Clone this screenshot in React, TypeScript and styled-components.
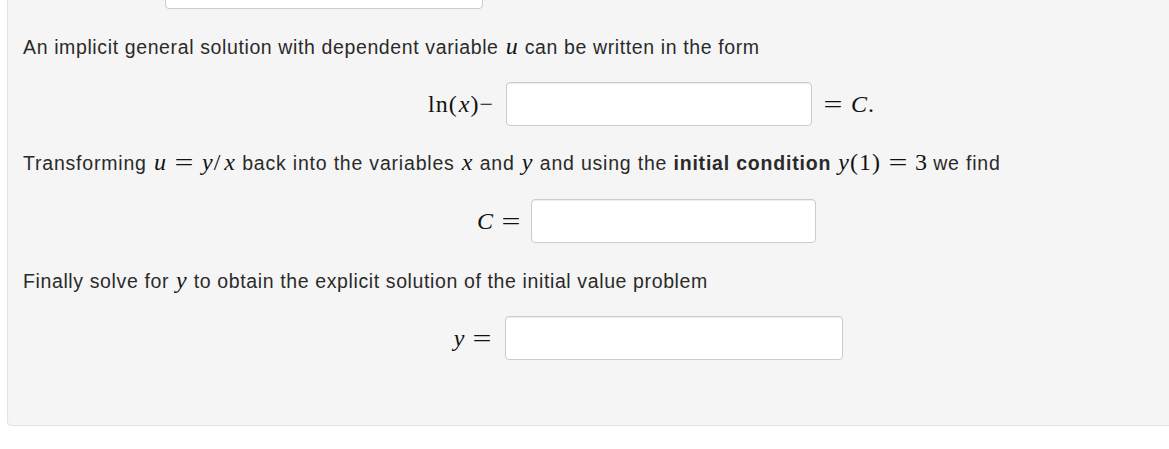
import React from 'react'
import styled, { createGlobalStyle } from 'styled-components'

const GlobalStyle = createGlobalStyle`
  html, body {
    margin: 0;
    padding: 0;
    background: #ffffff;
    overflow: hidden;
  }
  body {
    font-family: 'Liberation Sans', Arial, sans-serif;
    color: #2a2a2a;
  }
`

const Panel = styled.div`
  margin: -41px 0 0 7px;
  width: 1290px;
  padding: 5px 15px 65px 15px;
  background: #f5f5f5;
  border: 1px solid #e3e3e3;
  border-radius: 4px;
  box-shadow: inset 0 1px 1px rgba(0, 0, 0, 0.05);
  box-sizing: border-box;
`

const TopRow = styled.div`
  padding-left: 142px;
  height: 44px;
`

const Paragraph = styled.p<{ $gap: number; $tracking?: number }>`
  margin: ${(props) => props.$gap}px 0 0 0;
  font-size: 19.5px;
  letter-spacing: ${(props) => props.$tracking || 0.62}px;
  line-height: 24px;
  height: 24px;
  white-space: nowrap;
`

// centred display row; $left / $right nudge the centre line
const Display = styled.div<{ $gap: number; $left?: number; $right?: number }>`
  margin-top: ${(props) => props.$gap}px;
  display: flex;
  align-items: center;
  justify-content: center;
  width: 1250px;
  height: 44px;
  padding: 0 ${(props) => props.$right || 0}px 0 ${(props) => props.$left || 0}px;
  box-sizing: border-box;
`

const Math = styled.span<{ $spacing?: number }>`
  font-family: 'Liberation Serif', 'Times New Roman', serif;
  font-size: 24px;
  letter-spacing: ${(props) => props.$spacing || 0}px;
  line-height: 0;
  color: #111111;
  white-space: nowrap;
`

const Var = styled.i`
  font-family: 'Liberation Serif', 'Times New Roman', serif;
  font-style: italic;
  font-size: 24px;
  letter-spacing: 0;
  line-height: 0;
  color: #111111;
  padding: 0 1px;
`

const Eq = styled.span<{ $left?: number }>`
  display: inline-block;
  width: 18px;
  margin: 0 8px 0 ${(props) => props.$left || 8}px;
  text-align: center;
  font-family: 'Liberation Serif', 'Times New Roman', serif;
  font-size: 24px;
  letter-spacing: 0;
  line-height: 0;
  color: #111111;
  transform: scaleX(1.4);
`

const Answer = styled.input<{ $width: number; $gapLeft?: number }>`
  width: ${(props) => props.$width}px;
  height: 44px;
  box-sizing: border-box;
  border: 1px solid #cccccc;
  border-radius: 4px;
  background: #ffffff;
  box-shadow: inset 0 1px 1px rgba(0, 0, 0, 0.075);
  padding: 6px 12px;
  font-size: 17px;
  margin: 0 0 0 ${(props) => props.$gapLeft || 0}px;
  outline: none;
`

const Bold = styled.b`
  font-weight: bold;
`

const App = () => (
  <>
    <GlobalStyle />
    <Panel>
      <TopRow>
        <Answer $width={318} />
      </TopRow>
      <Paragraph $gap={26}>
        An implicit general solution with dependent variable <Var>u</Var> can be written in the form
      </Paragraph>
      <Display $gap={23} $left={6}>
        <Math $spacing={1}>
          ln(<Var>x</Var>)−
        </Math>
        <Answer $width={306} $gapLeft={12} />
        <Math>
          <Eq $left={12}>=</Eq>
          <Var>C</Var>.
        </Math>
      </Display>
      <Paragraph $gap={25} $tracking={0.8}>
        Transforming <Var>u</Var>
        <Eq>=</Eq>
        <Var>y</Var>
        <Math $spacing={3}>/</Math>
        <Var>x</Var> back into the variables <Var>x</Var> and <Var>y</Var> and using the{' '}
        <Bold>initial condition</Bold> <Var>y</Var>
        <Math $spacing={1}>(1)</Math>
        <Eq>=</Eq>
        <Math>3</Math> we find
      </Paragraph>
      <Display $gap={24} $right={4}>
        <Var>C</Var>
        <Eq>=</Eq>
        <Answer $width={285} $gapLeft={3} />
      </Display>
      <Paragraph $gap={26}>
        Finally solve for <Var>y</Var> to obtain the explicit solution of the initial value problem
      </Paragraph>
      <Display $gap={23}>
        <Var>y</Var>
        <Eq>=</Eq>
        <Answer $width={338} $gapLeft={6} />
      </Display>
    </Panel>
  </>
)

export default App
